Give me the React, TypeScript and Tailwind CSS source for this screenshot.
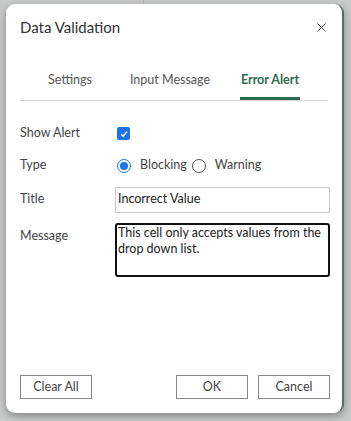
import { X } from 'lucide-react'

function Radio({ checked }: { checked: boolean }) {
  return (
    <span className={`flex h-[14px] w-[14px] items-center justify-center rounded-full border ${checked ? 'border-[#1a73e8]' : 'border-[#555]'}`}>
      {checked && <span className="h-[8px] w-[8px] rounded-full bg-[#1a73e8]" />}
    </span>
  )
}

export default function App() {
  return (
    <div
      className="h-[421px] w-[351px] overflow-hidden bg-[#c9cbca] text-[#262626]"
      style={{ fontFamily: '"Segoe UI", Lato, sans-serif' }}
    >
      <div className="flex h-[4px] items-start">
        <div className="h-full w-[144px] border-r border-[#b0b0b0]" />
      </div>
      <div className="ml-[6px] flex h-[409px] w-[338px] flex-col rounded-[9px] border-r-2 border-[#5a6a64] bg-white shadow-[0_3px_8px_rgba(0,0,0,0.35)]">
        {/* Header */}
        <div className="flex items-center justify-between pl-[14px] pr-[13px] pt-[11px]">
          <h1 className="text-[15px] leading-[24px] text-[#333]">Data Validation</h1>
          <X size={15} strokeWidth={1.4} className="text-[#333]" />
        </div>

        {/* Tabs */}
        <div className="mx-[14px] mt-[32px] flex border-b border-[#d6d6d6] text-[12.5px]">
          <div className="flex w-[100px] justify-center pb-[10px] text-[#555]">Settings</div>
          <div className="flex w-[100px] justify-center pb-[10px] text-[#555]">Input Message</div>
          <div className="flex w-[100px] flex-col items-center">
            <span className="pb-[7px] font-bold text-[#2d6b4f]">Error Alert</span>
            <span className="h-[3px] w-[60px] bg-[#2d6b4f]" />
          </div>
        </div>

        {/* Form */}
        <div className="mt-[22px] flex flex-col pl-[14px] pr-[12px] text-[12.5px] text-[#444]">
          <div className="flex h-[22px] items-center">
            <span className="w-[97px]">Show Alert</span>
            <span className="flex h-[13px] w-[13px] items-center justify-center rounded-[2px] bg-[#1a73e8]">
              <svg viewBox="0 0 12 12" className="h-[10px] w-[10px]">
                <path d="M2.5 6.2 L5 8.6 L9.6 3.4" fill="none" stroke="white" strokeWidth="1.7" />
              </svg>
            </span>
          </div>
          <div className="mt-[10px] flex h-[22px] items-center">
            <span className="w-[97px]">Type</span>
            <Radio checked />
            <span className="ml-[9px]">Blocking</span>
            <span className="ml-[5px]">
              <Radio checked={false} />
            </span>
            <span className="ml-[9px]">Warning</span>
          </div>
          <div className="mt-[10px] flex items-center">
            <span className="w-[95px]">Title</span>
            <div className="flex h-[26px] flex-1 items-center border border-[#c8c8c8] px-[2px] text-[#222]">
              Incorrect Value
            </div>
          </div>
          <div className="mt-[10px] flex items-start">
            <span className="w-[95px] pt-[4px]">Message</span>
            <div className="h-[54px] flex-1 rounded-[3px] border-2 border-[#111] px-[1px] leading-[16px] text-[#222]">
              This cell only accepts values from the drop down list.
            </div>
          </div>
        </div>

        {/* Footer */}
        <div className="mt-auto mb-[14px] flex items-center pl-[14px] pr-[12px] text-[12.5px] text-[#444]">
          <button className="h-[24px] w-[72px] border border-[#8a8a8a]">Clear All</button>
          <button className="ml-auto h-[24px] w-[72px] border border-[#8a8a8a]">OK</button>
          <button className="ml-[10px] h-[24px] w-[72px] border border-[#8a8a8a]">Cancel</button>
        </div>
      </div>
    </div>
  )
}
